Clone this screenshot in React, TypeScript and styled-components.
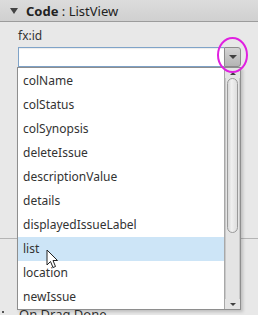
import React from 'react';
import styled, { createGlobalStyle } from 'styled-components';

const GlobalStyle = createGlobalStyle`
  html, body {
    margin: 0;
    padding: 0;
    background: #e8e8e8;
  }
`;

const items = [
  'colName',
  'colStatus',
  'colSynopsis',
  'deleteIssue',
  'descriptionValue',
  'details',
  'displayedIssueLabel',
  'list',
  'location',
  'newIssue',
];

const App = () => {
  return (
    <>
      <GlobalStyle />
      <Panel>
        <Header>
          <Caret />
          <HeaderTitle>
            <b>Code</b> : ListView
          </HeaderTitle>
        </Header>
        <Body>
          <FieldLabel>fx:id</FieldLabel>
          <Combo>
            <ComboField />
            <ComboButton>
              <ArrowDown />
            </ComboButton>
            <Highlight />
            <Popup>
              <List>
                {items.map((item) => (
                  <Item key={item} selected={item === 'list'}>
                    {item}
                  </Item>
                ))}
              </List>
              <ScrollBar>
                <ScrollArrow>
                  <SmallArrow up />
                </ScrollArrow>
                <Track>
                  <Thumb />
                </Track>
                <ScrollArrow>
                  <SmallArrow />
                </ScrollArrow>
              </ScrollBar>
            </Popup>
          </Combo>
          <Divider />
          <EventRow>On Drag Done</EventRow>
        </Body>
        <Cursor width="13" height="20" viewBox="0 0 13 20">
          <path
            d="M1 1 L1 16 L4.5 12.5 L7 18.5 L9.5 17.5 L7 11.5 L11.5 11.5 Z"
            fill="#fff"
            stroke="#222"
            strokeWidth="1"
            strokeLinejoin="round"
          />
        </Cursor>
        <Mark />
      </Panel>
    </>
  );
};

export default App;

const Panel = styled.div`
  position: relative;
  width: 258px;
  height: 315px;
  overflow: hidden;
  background: #e8e8e8;
  font-family: 'Noto Sans', 'Open Sans', sans-serif;
  color: #333;
`;

const Header = styled.div`
  display: flex;
  align-items: center;
  gap: 8px;
  height: 21px;
  padding-left: 10px;
  background: linear-gradient(#dcdcdc, #d0d0d0);
  border-bottom: 1px solid #9c9c9c;
`;

const Caret = styled.span`
  width: 0;
  height: 0;
  border-left: 4px solid transparent;
  border-right: 4px solid transparent;
  border-top: 6px solid #444;
`;

const HeaderTitle = styled.span`
  font-size: 13px;
  color: #222;

  b {
    font-weight: 700;
  }
`;

const Body = styled.div`
  padding: 6px 17px 0 18px;
`;

const FieldLabel = styled.div`
  font-size: 12px;
  line-height: 15px;
  color: #333;
`;

const Combo = styled.div`
  position: relative;
  display: flex;
  height: 20px;
  margin-top: 4px;
`;

const ComboField = styled.div`
  flex: 1;
  background: #fff;
  border: 1px solid #7fa3c8;
  border-right: none;
  box-shadow: inset 0 1px 1px rgba(0, 0, 0, 0.08);
`;

const ComboButton = styled.div`
  display: flex;
  align-items: center;
  justify-content: center;
  width: 17px;
  background: linear-gradient(#d4d4d4, #b4b4b4);
  border: 1px solid #8c8c8c;
  border-radius: 0 3px 3px 0;
  box-sizing: border-box;
`;

const ArrowDown = styled.span`
  width: 0;
  height: 0;
  border-left: 4px solid transparent;
  border-right: 4px solid transparent;
  border-top: 4px solid #404040;
`;

const Highlight = styled.div`
  position: absolute;
  left: 199px;
  top: -10px;
  width: 27px;
  height: 32px;
  border: 2px solid #e020e0;
  border-radius: 50%;
  z-index: 3;
  pointer-events: none;
`;

const Popup = styled.div`
  position: absolute;
  left: -1px;
  top: 20px;
  z-index: 2;
  display: flex;
  width: 224px;
  height: 243px;
  box-sizing: border-box;
  background: #fff;
  border: 1px solid #8e8e8e;
  box-shadow: 2px 2px 3px rgba(0, 0, 0, 0.18);
`;

const List = styled.div`
  flex: 1;
  padding-top: 1px;
`;

const Item = styled.div<{ selected?: boolean }>`
  height: 24px;
  line-height: 24px;
  padding-left: 5px;
  font-size: 12px;
  color: #333;
  background: ${(p) => (p.selected ? '#cde5f7' : 'transparent')};
`;

const ScrollBar = styled.div`
  display: flex;
  flex-direction: column;
  width: 15px;
  background: #e4e4e4;
  border-left: 1px solid #a8a8a8;
`;

const ScrollArrow = styled.div`
  display: flex;
  align-items: center;
  justify-content: center;
  height: 10px;
`;

const SmallArrow = styled.span<{ up?: boolean }>`
  width: 0;
  height: 0;
  border-left: 3px solid transparent;
  border-right: 3px solid transparent;
  ${(p) => (p.up ? 'border-bottom: 3px solid #404040;' : 'border-top: 3px solid #404040;')}
`;

const Track = styled.div`
  flex: 1;
  padding: 0 1px;
  border-left: 1px solid #c8c8c8;
  border-right: 1px solid #c8c8c8;
`;

const Thumb = styled.div`
  height: 155px;
  box-sizing: border-box;
  background: linear-gradient(90deg, #d8d8d8, #f0f0f0 40%, #dedede);
  border: 1px solid #9a9a9a;
  border-radius: 6px;
`;

const Divider = styled.div`
  height: 1px;
  margin: 171px -17px 0 -18px;
  background: #b4b4b4;
`;

const EventRow = styled.div`
  margin-top: 66px;
  padding-left: 1px;
  font-size: 13px;
  color: #333;
`;

const Cursor = styled.svg`
  position: absolute;
  left: 46px;
  top: 249px;
  z-index: 4;
`;

const Mark = styled.span`
  position: absolute;
  left: 2px;
  top: 311px;
  width: 2px;
  height: 2px;
  background: #555;
`;
